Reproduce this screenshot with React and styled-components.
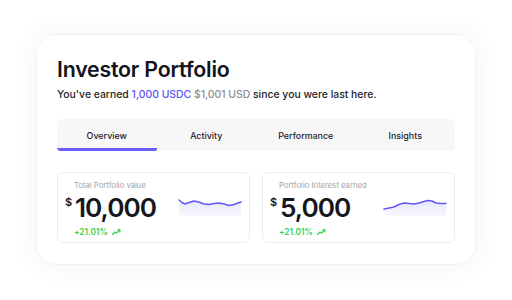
import React from "react";
import styled, { createGlobalStyle } from "styled-components";

const Global = createGlobalStyle`
  html, body { margin: 0; padding: 0; background: #ffffff; }
  body { font-family: Inter, "Noto Sans", sans-serif; -webkit-font-smoothing: antialiased; }
`;

const Page = styled.div`
  width: 512px;
  height: 300px;
  padding: 34px 36px 0;
  box-sizing: border-box;
`;

const Panel = styled.div`
  width: 440px;
  height: 231px;
  box-sizing: border-box;
  background: #fff;
  border-radius: 20px;
  border: 1px solid #f2f2f4;
  box-shadow: 0 0 20px 8px rgba(0, 0, 0, 0.03);
  padding: 20px 20px 0;
  display: flex;
  flex-direction: column;
`;

const Title = styled.h1`
  margin: 0;
  font-size: 21.3px;
  line-height: 28px;
  font-weight: 600;
  color: #14141c;
  letter-spacing: -0.2px;
`;

const Subtitle = styled.p`
  margin: 5px 0 0;
  font-size: 10.4px;
  line-height: 14px;
  font-weight: 500;
  color: #1d1d26;
`;

const Accent = styled.span`
  color: ${(p) => (p.$tone === "muted" ? "#8c8c94" : "#5b4ff5")};
`;

const Tabs = styled.div`
  margin-top: 17px;
  height: 32px;
  background: #f7f7f8;
  border-radius: 4px;
  display: grid;
  grid-template-columns: repeat(4, 1fr);
  overflow: hidden;
`;

const Tab = styled.div`
  display: flex;
  align-items: center;
  justify-content: center;
  font-size: 8.9px;
  font-weight: 500;
  color: #22222a;
  border-bottom: 3px solid ${(p) => (p.$active ? "#6a5cf6" : "transparent")};
  border-radius: ${(p) => (p.$active ? "0 0 2px 2px" : "0")};
  padding-top: 3px;
`;

const Stats = styled.div`
  margin-top: 21px;
  display: grid;
  grid-template-columns: 1fr 1fr;
  gap: 12px;
`;

const StatCard = styled.div`
  height: 71px;
  box-sizing: border-box;
  border: 1px solid #ececef;
  border-radius: 6px;
  padding: 8px 7px 0 16px;
  display: flex;
  align-items: center;
  justify-content: space-between;
`;

const StatInfo = styled.div`
  display: flex;
  flex-direction: column;
  align-self: flex-start;
`;

const Label = styled.div`
  font-size: 7.7px;
  line-height: 10px;
  color: #a3a3aa;
  font-weight: 400;
`;

const ValueRow = styled.div`
  display: flex;
  align-items: flex-start;
  margin-top: 3px;
`;

const Currency = styled.span`
  margin-left: -9px;
  width: 10px;
  font-size: 11px;
  font-weight: 600;
  line-height: 14px;
  color: #16161e;
  margin-top: 1px;
`;

const Value = styled.span`
  font-size: 26.2px;
  line-height: 28px;
  font-weight: 600;
  color: #16161e;
  letter-spacing: -1px;
`;

const Change = styled.div`
  margin-top: 5px;
  display: flex;
  align-items: center;
  gap: 4px;
  font-size: 8.3px;
  line-height: 10px;
  font-weight: 600;
  color: #3ccf4e;
`;

const Spark = styled.svg`
  width: 64px;
  height: 18px;
  display: block;
  margin-top: -9px;
`;

const TrendIcon = () => (
  <svg width="9" height="6" viewBox="0 0 9 6" fill="none">
    <path d="M0.5 5.5 L3 3 L4.5 4.2 L7.5 1" stroke="#3ccf4e" strokeWidth="1.2" strokeLinecap="round" strokeLinejoin="round" />
    <path d="M5.8 0.8 H7.9 V2.9" stroke="#3ccf4e" strokeWidth="1.2" strokeLinecap="round" strokeLinejoin="round" />
  </svg>
);

const Sparkline = ({ points }) => {
  const line = points.map((p, i) => `${i === 0 ? "M" : "L"}${p[0]} ${p[1]}`).join(" ");
  const area = `${line} L${points[points.length - 1][0]} 18 L${points[0][0]} 18 Z`;
  return (
    <Spark viewBox="0 0 64 18">
      <defs>
        <linearGradient id="sg" x1="0" y1="0" x2="0" y2="1">
          <stop offset="0" stopColor="#6a5cf6" stopOpacity="0.16" />
          <stop offset="1" stopColor="#6a5cf6" stopOpacity="0.04" />
        </linearGradient>
      </defs>
      <path d={area} fill="url(#sg)" />
      <path d={line} stroke="#6458f4" strokeWidth="1.6" fill="none" strokeLinejoin="round" strokeLinecap="round" />
    </Spark>
  );
};

const smooth1 = [
  [1, 2], [4, 4.5], [7, 6], [11, 4.5], [16, 3], [21, 4], [26, 6], [31, 6.5], [36, 5.5], [41, 5], [46, 6], [51, 7.5], [56, 6.5], [60, 5], [63, 4],
];
const smooth2 = [
  [1, 11], [6, 10], [11, 9], [16, 6.5], [21, 5], [26, 5.5], [31, 6], [36, 5], [41, 3.5], [45, 2.5], [49, 3], [53, 5], [58, 5.5], [63, 5.5],
];

const stats = [
  { label: "Total Portfolio value", value: "10,000", points: smooth1 },
  { label: "Portfolio Interest earned", value: "5,000", points: smooth2 },
];

export default function App() {
  return (
    <>
      <Global />
      <Page>
        <Panel>
          <Title>Investor Portfolio</Title>
          <Subtitle>
            You've earned <Accent>1,000 USDC</Accent> <Accent $tone="muted">$1,001 USD</Accent> since you were last here.
          </Subtitle>
          <Tabs>
            <Tab $active>Overview</Tab>
            <Tab>Activity</Tab>
            <Tab>Performance</Tab>
            <Tab>Insights</Tab>
          </Tabs>
          <Stats>
            {stats.map((s) => (
              <StatCard key={s.label}>
                <StatInfo>
                  <Label>{s.label}</Label>
                  <ValueRow>
                    <Currency>$</Currency>
                    <Value>{s.value}</Value>
                  </ValueRow>
                  <Change>
                    +21.01% <TrendIcon />
                  </Change>
                </StatInfo>
                <Sparkline points={s.points} />
              </StatCard>
            ))}
          </Stats>
        </Panel>
      </Page>
    </>
  );
}
